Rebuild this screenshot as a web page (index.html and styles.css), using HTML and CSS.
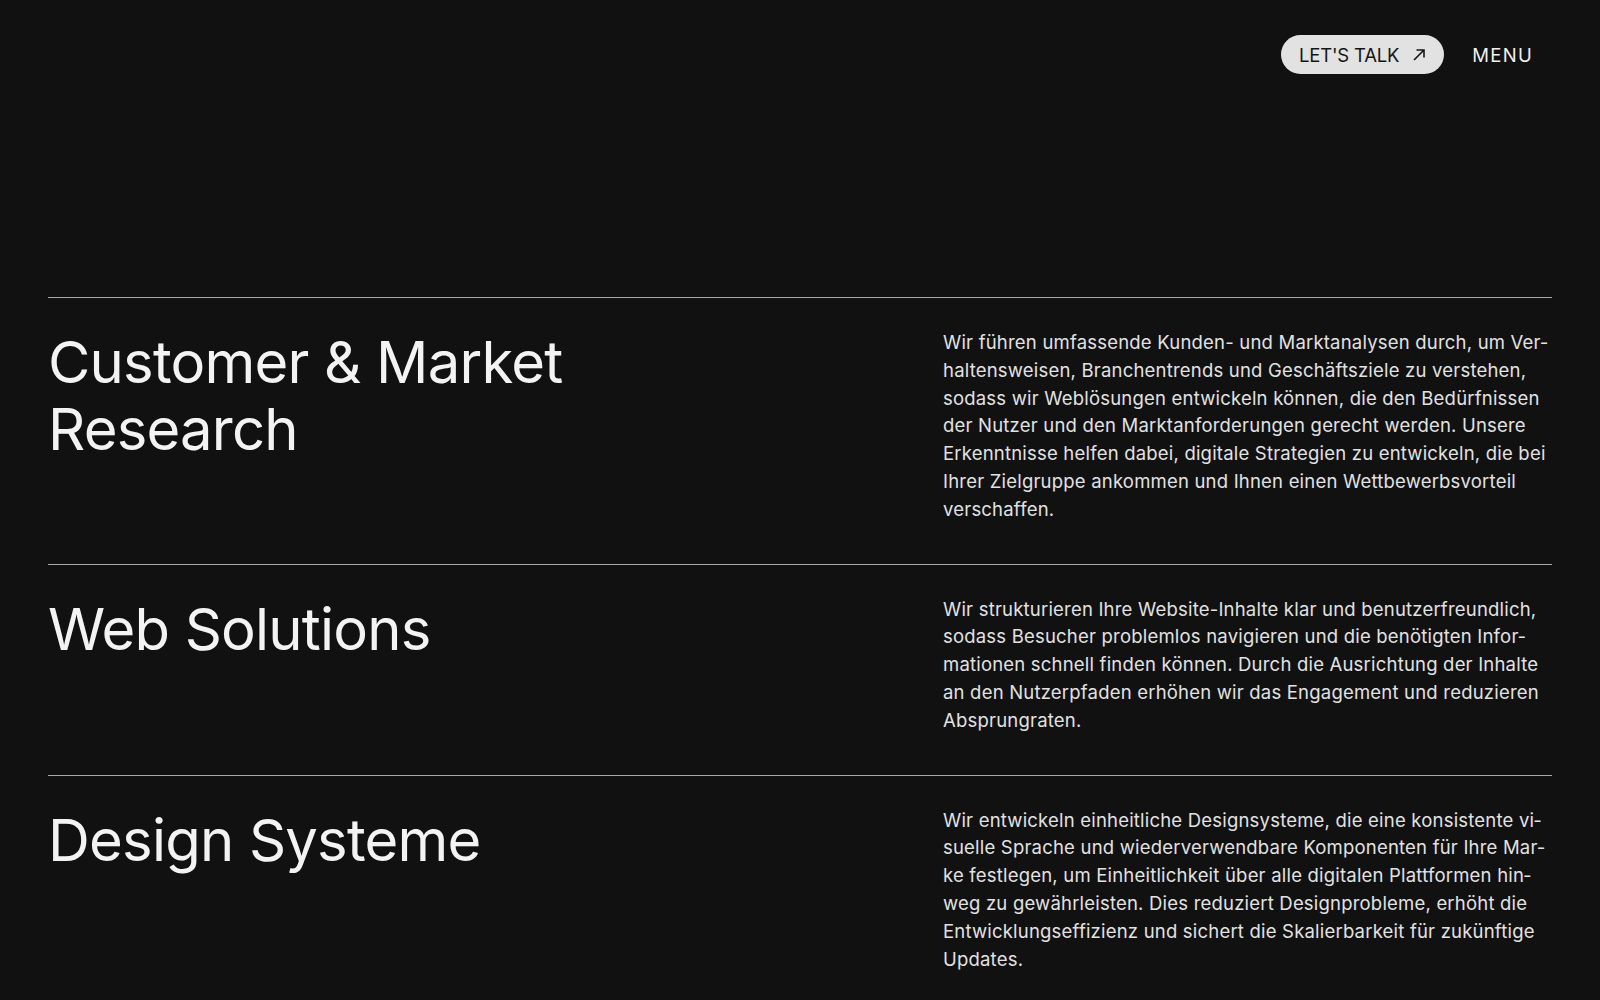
FILE: index.html
```html
<!DOCTYPE html>
<html lang="de">
<head>
<meta charset="utf-8">
<title>Leistungen</title>
<link rel="stylesheet" href="styles.css">
</head>
<body>
<header class="topbar">
  <a class="talk" href="#">LET'S TALK
    <svg class="talk-arrow" viewBox="0 0 14 14" width="14" height="14" aria-hidden="true"><path d="M2 12 L12 2 M4.5 2 H12 V9.5" fill="none" stroke="currentColor" stroke-width="1.6"/></svg>
  </a>
  <button class="menu" type="button">MENU</button>
</header>
<main class="services">
  <section class="service">
    <h2 class="service-title">Customer &amp; Market<br>Research</h2>
    <p class="service-text">Wir führen umfassende Kunden- und Marktanalysen durch, um Ver&shy;haltensweisen, Branchentrends und Geschäftsziele zu verstehen, sodass wir Weblösungen entwickeln können, die den Bedürfnissen der Nutzer und den Marktanforderungen gerecht werden. Unsere Erkenntnisse helfen dabei, digitale Strategien zu entwickeln, die bei Ihrer Zielgruppe ankommen und Ihnen einen Wettbewerbsvorteil verschaffen.</p>
  </section>
  <section class="service">
    <h2 class="service-title">Web Solutions</h2>
    <p class="service-text">Wir strukturieren Ihre Website-Inhalte klar und benutzerfreundlich, sodass Besucher problemlos navigieren und die benötigten Infor&shy;mationen schnell finden können. Durch die Ausrichtung der Inhalte an den Nutzerpfaden erhöhen wir das Engagement und reduzieren Absprungraten.</p>
  </section>
  <section class="service">
    <h2 class="service-title">Design Systeme</h2>
    <p class="service-text">Wir entwickeln einheitliche Designsysteme, die eine konsistente vi&shy;suelle Sprache und wiederverwendbare Komponenten für Ihre Mar&shy;ke festlegen, um Einheitlichkeit über alle digitalen Plattformen hin&shy;weg zu gewährleisten. Dies reduziert Designprobleme, erhöht die Entwicklungseffizienz und sichert die Skalierbarkeit für zukünftige Updates.</p>
  </section>
</main>
</body>
</html>
```
FILE: styles.css
```css
* { box-sizing: border-box; }
html, body { margin: 0; padding: 0; }
body {
  background: #111111;
  color: #f0f0f0;
  font-family: Inter, "Liberation Sans", sans-serif;
  height: 1000px;
  overflow: hidden;
}
.topbar {
  display: flex;
  justify-content: flex-end;
  align-items: center;
  gap: 9px;
  padding: 35px 48px 0 48px;
}
.talk {
  display: inline-flex;
  align-items: center;
  gap: 13px;
  height: 39px;
  padding: 0 18px;
  border-radius: 20px;
  background: #e2e2e2;
  color: #151515;
  text-decoration: none;
  font-size: 18.5px;
  letter-spacing: -0.2px;
}
.talk-arrow { display: block; }
.menu {
  background: none;
  border: 0;
  color: #f0f0f0;
  font-family: inherit;
  font-size: 18.5px;
  padding: 8px 19px;
  letter-spacing: 1.3px;
}
.services {
  margin: 223px 48px 0 48px;
}
.service {
  display: grid;
  grid-template-columns: 1fr 609px;
  border-top: 1px solid #a8a8a8;
  padding: 31px 0 40px 0;
}
.service-title {
  margin: 0;
  font-weight: 400;
  font-size: 58px;
  line-height: 67px;
  letter-spacing: -0.8px;
  color: #f3f3f3;
}
.service-text {
  margin: 0;
  font-size: 18.5px;
  line-height: 27.8px;
  letter-spacing: 0.2px;
  color: #e2e2e2;
  hyphens: manual;
}
```
